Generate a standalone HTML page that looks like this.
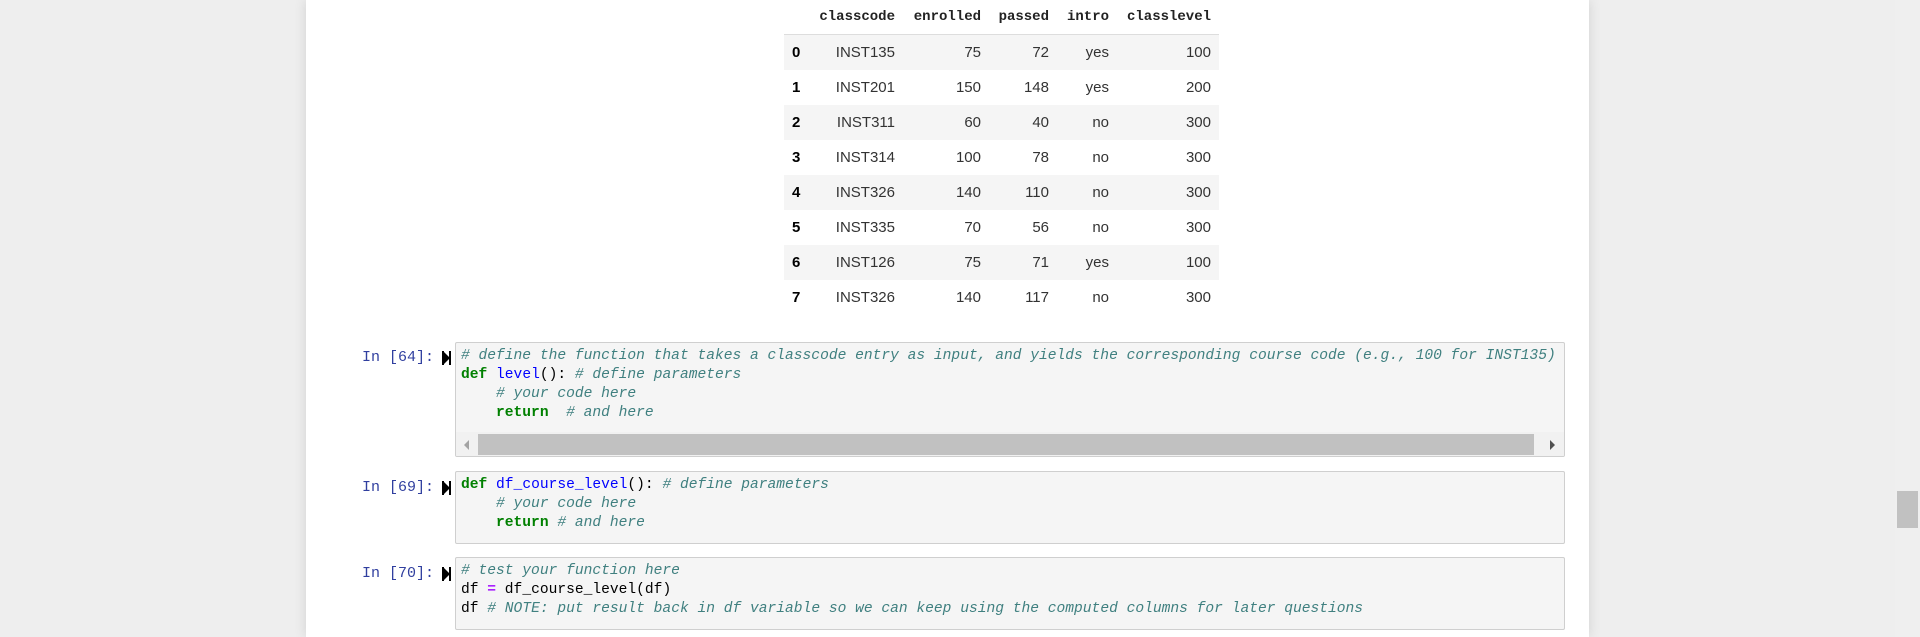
<!DOCTYPE html>
<html><head><meta charset="utf-8"><style>
body{margin:0;width:1920px;height:637px;background:#eeeeee;position:relative;overflow:hidden;font-family:"Liberation Sans",sans-serif}
#page{position:absolute;left:306px;top:0;width:1283px;height:637px;background:#fff;box-shadow:0 0 12px rgba(0,0,0,.12)}
#sb{position:absolute;left:1895px;top:0;width:25px;height:637px;background:#efefef}
#thumb{position:absolute;left:1897px;top:491px;width:21px;height:37px;background:#c1c1c1}
table{position:absolute;left:784px;top:0;border-collapse:collapse;font-size:15px;color:#333}
th{font-family:"Liberation Mono",monospace;font-weight:bold;font-size:14px;text-align:right;padding:0 8px 0 0;height:34px;border-bottom:1px solid #ddd;color:#222}
td{text-align:right;padding:0 8px 0 0;height:35px}
td.i{text-align:left;padding-left:8px;font-weight:bold;color:#000}
tr.od td{background:#f5f5f5}
.p{position:absolute;left:362px;font-family:"Liberation Mono",monospace;font-size:15px;color:#303F9F}
.r{position:absolute;left:442px;width:9px;height:14px}
.c{position:absolute;left:455px;width:1108px;background:#f5f5f5;border:1px solid #cfcfcf;border-radius:2px;overflow:hidden}
pre{margin:0;padding:4px 4px 0 5px;font-family:"Liberation Mono",monospace;font-size:14.6px;line-height:19px;color:#000;white-space:pre}
.cm{color:#408080;font-style:italic}.k{color:#008000;font-weight:bold}.f{color:#0000FF}.op{color:#AA22FF;font-weight:bold}
</style></head><body>
<div id="page"></div>
<div id="sb"></div><div id="thumb"></div>
<table>
<colgroup><col style="width:26px"><col style="width:93px"><col style="width:86px"><col style="width:68px"><col style="width:60px"><col style="width:102px"></colgroup>
<tr><th></th><th>classcode</th><th>enrolled</th><th>passed</th><th>intro</th><th>classlevel</th></tr>
<tr class="od"><td class="i">0</td><td>INST135</td><td>75</td><td>72</td><td>yes</td><td>100</td></tr>
<tr><td class="i">1</td><td>INST201</td><td>150</td><td>148</td><td>yes</td><td>200</td></tr>
<tr class="od"><td class="i">2</td><td>INST311</td><td>60</td><td>40</td><td>no</td><td>300</td></tr>
<tr><td class="i">3</td><td>INST314</td><td>100</td><td>78</td><td>no</td><td>300</td></tr>
<tr class="od"><td class="i">4</td><td>INST326</td><td>140</td><td>110</td><td>no</td><td>300</td></tr>
<tr><td class="i">5</td><td>INST335</td><td>70</td><td>56</td><td>no</td><td>300</td></tr>
<tr class="od"><td class="i">6</td><td>INST126</td><td>75</td><td>71</td><td>yes</td><td>100</td></tr>
<tr><td class="i">7</td><td>INST326</td><td>140</td><td>117</td><td>no</td><td>300</td></tr>
</table>

<div class="p" style="top:349px">In [64]:</div>
<svg class="r" style="top:351px" viewBox="0 0 9 14"><rect x="0" y="0" width="2" height="14"/><path d="M2 1L8 7L2 13Z"/><rect x="7" y="0" width="2" height="14"/></svg>
<div class="c" style="top:342px;height:113px">
<pre><span class="cm"># define the function that takes a classcode entry as input, and yields the corresponding course code (e.g., 100 for INST135)</span>
<span class="k">def</span> <span class="f">level</span>(): <span class="cm"># define parameters</span>
    <span class="cm"># your code here</span>
    <span class="k">return</span>  <span class="cm"># and here</span></pre>
<div style="position:absolute;left:0;top:89px;width:1108px;height:24px;background:#f1f1f1"></div>
<div style="position:absolute;left:22px;top:91px;width:1056px;height:21px;background:#c1c1c1"></div>
<div style="position:absolute;left:8px;top:97px;width:0;height:0;border-top:5px solid transparent;border-bottom:5px solid transparent;border-right:5px solid #a3a3a3"></div>
<div style="position:absolute;left:1094px;top:97px;width:0;height:0;border-top:5px solid transparent;border-bottom:5px solid transparent;border-left:5px solid #505050"></div>
</div>

<div class="p" style="top:479px">In [69]:</div>
<svg class="r" style="top:481px" viewBox="0 0 9 14"><rect x="0" y="0" width="2" height="14"/><path d="M2 1L8 7L2 13Z"/><rect x="7" y="0" width="2" height="14"/></svg>
<div class="c" style="top:471px;height:71px">
<pre><span class="k">def</span> <span class="f">df_course_level</span>(): <span class="cm"># define parameters</span>
    <span class="cm"># your code here</span>
    <span class="k">return</span> <span class="cm"># and here</span></pre></div>

<div class="p" style="top:565px">In [70]:</div>
<svg class="r" style="top:567px" viewBox="0 0 9 14"><rect x="0" y="0" width="2" height="14"/><path d="M2 1L8 7L2 13Z"/><rect x="7" y="0" width="2" height="14"/></svg>
<div class="c" style="top:557px;height:71px">
<pre><span class="cm"># test your function here</span>
df <span class="op">=</span> df_course_level(df)
df <span class="cm"># NOTE: put result back in df variable so we can keep using the computed columns for later questions</span></pre></div>
</body></html>
